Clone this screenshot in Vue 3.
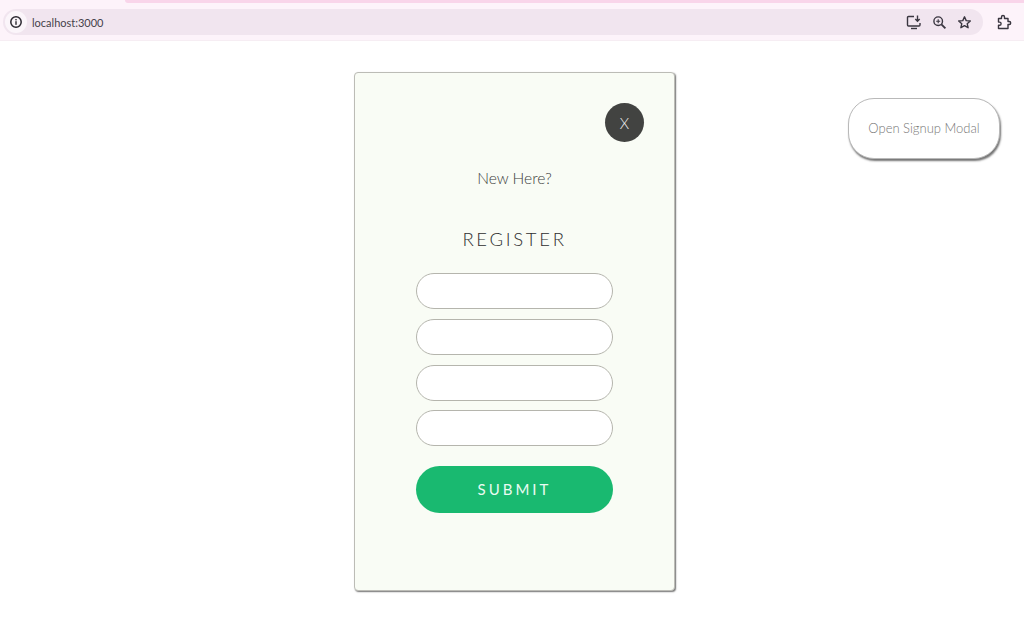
<template>
  <div class="page">
    <div class="browser-bar">
      <div class="tab-strip"><span class="tab-edge"></span></div>
      <div class="toolbar">
        <div class="url-pill">
          <span class="site-info">
            <svg width="14" height="14" viewBox="0 0 14 14">
              <circle cx="7" cy="7" r="5.2" fill="none" stroke="#2b2830" stroke-width="1.5" />
              <rect x="6.3" y="6.2" width="1.4" height="3.6" fill="#2b2830" />
              <rect x="6.3" y="4" width="1.4" height="1.4" fill="#2b2830" />
            </svg>
          </span>
          <span class="url">localhost:3000</span>
          <div class="url-icons">
            <svg width="16" height="16" viewBox="0 0 16 16" fill="none" stroke="#3a3640" stroke-width="1.4">
              <path d="M8 2.500H2.500a1 1 0 0 0-1 1v7.500a1 1 0 0 0 1 1h10.500a1 1 0 0 0 1-1V9" />
              <path d="M5 14.500h6" />
              <path d="M11.500 1.500v5.500M9.300 5l2.200 2.300L13.700 5" />
            </svg>
            <svg width="15" height="15" viewBox="0 0 15 15" fill="none" stroke="#3a3640" stroke-width="1.4">
              <circle cx="6.200" cy="6.200" r="4.300" />
              <path d="M9.400 9.400l4 4" stroke-width="1.800" />
              <path d="M4.200 6.200h4M6.200 4.200v4" stroke-width="1.100" />
            </svg>
            <svg width="15" height="15" viewBox="0 0 15 15" fill="none" stroke="#3a3640" stroke-width="1.4" stroke-linejoin="round">
              <path d="M7.500 1.800l1.700 3.800 4.100.4-3.100 2.700.9 4-3.600-2.100-3.600 2.100.9-4L1.700 6l4.100-.4z" />
            </svg>
          </div>
        </div>
        <span class="ext-icon">
          <svg width="16" height="16" viewBox="0 0 16 16" fill="none" stroke="#3a3640" stroke-width="1.4" stroke-linejoin="round">
            <path d="M2.500 4.500h3V3a1.500 1.500 0 0 1 3 0v1.500h3.500V7.500h1.200a1.500 1.500 0 0 1 0 3H12v4H2.500v-3.200h1a1.600 1.600 0 0 0 0-3.200h-1z" />
          </svg>
        </span>
      </div>
    </div>

    <main class="content">
      <form class="modal" @submit.prevent>
        <div class="modal-top">
          <button type="button" class="close-btn">X</button>
        </div>
        <p class="new-here">New Here?</p>
        <h2 class="title">REGISTER</h2>
        <input v-for="f in fields" :key="f" class="field" type="text" :aria-label="f" />
        <button type="submit" class="submit-btn">SUBMIT</button>
      </form>
      <button type="button" class="open-btn">Open Signup Modal</button>
    </main>
  </div>
</template>

<script setup>
const fields = ['name', 'email', 'password', 'confirm']
</script>

<style>
html, body { margin: 0; background: #fff; }
</style>

<style scoped>
.page {
  width: 1024px;
  height: 619px;
  overflow: hidden;
  background: #fff;
  font-family: "Lato", "Open Sans", sans-serif;
}

.browser-bar {
  height: 40px;
  background: #fdf3fa;
  border-bottom: 1px solid #f6edf3;
}

.tab-strip {
  height: 9px;
  padding-left: 125px;
}

.tab-edge {
  display: block;
  height: 3px;
  background: #f9d5ea;
  border-bottom-left-radius: 4px;
}

.toolbar {
  display: flex;
  align-items: center;
  padding-left: 3px;
}

.url-pill {
  width: 980px;
  height: 26px;
  box-sizing: border-box;
  background: #f1e5ef;
  border-radius: 13px;
  display: flex;
  align-items: center;
}

.site-info {
  width: 22px;
  height: 22px;
  margin-left: 2px;
  border-radius: 50%;
  background: #fbf5fa;
  display: flex;
  align-items: center;
  justify-content: center;
}

.url {
  margin-left: 5px;
  font-size: 11px;
  color: #45414a;
  font-family: "Lato", sans-serif;
}

.url-icons {
  margin-left: auto;
  margin-right: 11px;
  display: flex;
  align-items: center;
  gap: 10px;
}

.ext-icon {
  margin-left: 13px;
  display: flex;
}

.content {
  display: flex;
  align-items: flex-start;
  padding: 31px 0 0 354px;
}

.modal {
  width: 321px;
  height: 519px;
  box-sizing: border-box;
  background: #f9fcf5;
  border: 1px solid #bcbcb6;
  border-radius: 4px;
  box-shadow: 1px 1px 1.5px rgba(0, 0, 0, 0.55);
  display: flex;
  flex-direction: column;
  align-items: center;
  padding-top: 30px;
}

.modal-top {
  width: 100%;
  display: flex;
  justify-content: flex-end;
  padding-right: 30px;
  box-sizing: border-box;
}

.close-btn {
  width: 39px;
  height: 39px;
  padding: 0;
  border: none;
  border-radius: 50%;
  background: #424341;
  color: #f2f2f2;
  font-family: inherit;
  font-size: 15px;
  font-weight: 300;
  cursor: pointer;
}

.new-here {
  margin: 26px 0 0;
  font-size: 15.6px;
  line-height: 20px;
  font-weight: 300;
  color: #3c3c3c;
}

.title {
  margin: 39px 0 22px;
  font-size: 18.5px;
  line-height: 24px;
  font-weight: 300;
  letter-spacing: 2.7px;
  color: #2e2e2e;
}

.field {
  width: 197px;
  height: 36px;
  box-sizing: border-box;
  margin-bottom: 9.8px;
  background: #fff;
  border: 1px solid #b5b5ad;
  border-radius: 18px;
  outline: none;
}

.submit-btn {
  width: 197px;
  height: 47px;
  margin-top: 9.8px;
  border: none;
  border-radius: 24px;
  background: #19b970;
  color: #e9fbf2;
  font-family: inherit;
  font-size: 15px;
  font-weight: 400;
  letter-spacing: 3px;
  cursor: pointer;
}

.open-btn {
  width: 152px;
  height: 61px;
  padding-bottom: 3px;
  margin: 26px 0 0 173px;
  background: #fff;
  border: 1px solid #b9b9b9;
  border-radius: 26px;
  box-shadow: 1px 2px 2px rgba(0, 0, 0, 0.55);
  color: #777;
  font-family: inherit;
  font-size: 13px;
  font-weight: 300;
  cursor: pointer;
}
</style>
